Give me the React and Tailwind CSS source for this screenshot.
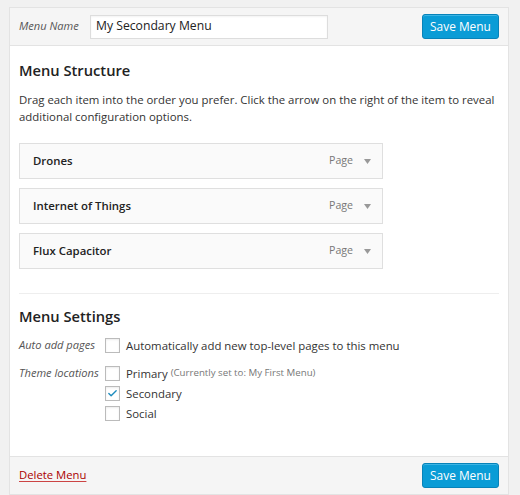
import { Check } from "lucide-react"

const items = ["Drones", "Internet of Things", "Flux Capacitor"]

function SaveButton() {
  return (
    <button className="h-[25px] w-[77px] rounded-[3px] border border-[#0783b9] bg-[#0a9cd6] text-[11.9px] text-white shadow-[inset_0_1px_0_#3cb4e4]">
      Save Menu
    </button>
  )
}

function Box({ checked }) {
  return (
    <span className="flex h-[15px] w-[15px] shrink-0 items-center justify-center border border-[#bbb] bg-white shadow-[inset_0_1px_2px_rgba(0,0,0,0.08)]">
      {checked && <Check className="h-[11px] w-[11px] text-[#1e8cbe]" strokeWidth={3} />}
    </span>
  )
}

export default function App() {
  return (
    <div className="h-[495px] w-[520px] overflow-hidden bg-[#f1f1f1] pl-[9px] pt-[7px] font-['Open_Sans',sans-serif] text-[11.4px] text-[#333]">
      <div className="w-[500px] border border-[#e3e3e3] bg-white">
        {/* Header */}
        <div className="flex h-[38px] items-center border-b border-[#e3e3e3] bg-[#f5f5f5] pl-[9px] pr-[9px]">
          <span className="w-[71px] whitespace-nowrap text-[11.1px] italic text-[#555]">Menu Name</span>
          <div className="flex h-[24px] w-[238px] items-center border border-[#ddd] bg-white px-[5px] text-[12.2px] text-[#222] shadow-[inset_0_1px_2px_rgba(0,0,0,0.05)]">
            My Secondary Menu
          </div>
          <div className="ml-auto">
            <SaveButton />
          </div>
        </div>

        {/* Body */}
        <div className="h-[410px] px-[9px] pt-[12px]">
          <h3 className="text-[14.7px] font-semibold leading-[24px] text-[#222]">Menu Structure</h3>
          <p className="mt-[10px] text-[11.4px] leading-[16.5px] text-[#333]">
            Drag each item into the order you prefer. Click the arrow on the right of the item to reveal additional configuration options.
          </p>

          <ul className="mt-[18px] flex flex-col gap-[9px]">
            {items.map((item) => (
              <li
                key={item}
                className="flex h-[36px] w-[364px] items-center border border-[#dfdfdf] bg-[#fafafa] pl-[13px] pr-[11px]"
              >
                <span className="text-[11.4px] font-semibold text-[#222]">{item}</span>
                <span className="ml-auto text-[10.6px] text-[#777]">Page</span>
                <svg className="ml-[11px]" width="7" height="5" viewBox="0 0 7 5">
                  <path d="M0 0h7L3.5 5z" fill="#999" />
                </svg>
              </li>
            ))}
          </ul>

          <div className="mt-[24px] border-t border-[#eee]" />

          <h3 className="mt-[10px] text-[14.7px] font-semibold leading-[24px] text-[#222]">Menu Settings</h3>

          <div className="mt-[10px] flex h-[15px] items-center">
            <span className="w-[86px] whitespace-nowrap text-[11.1px] italic text-[#555]">Auto add pages</span>
            <Box />
            <span className="ml-[6px] whitespace-nowrap text-[11.4px] text-[#333]">Automatically add new top-level pages to this menu</span>
          </div>

          <div className="mt-[13px] flex">
            <span className="flex h-[15px] w-[86px] items-center whitespace-nowrap text-[11.1px] italic text-[#555]">Theme locations</span>
            <div className="flex flex-col gap-[5px]">
              <div className="flex h-[15px] items-center">
                <Box />
                <span className="ml-[6px] text-[11.4px] text-[#333]">Primary</span>
                <span className="ml-[3px] text-[9.7px] text-[#777]">(Currently set to: My First Menu)</span>
              </div>
              <div className="flex h-[15px] items-center">
                <Box checked />
                <span className="ml-[6px] text-[11.4px] text-[#333]">Secondary</span>
              </div>
              <div className="flex h-[15px] items-center">
                <Box />
                <span className="ml-[6px] text-[11.4px] text-[#333]">Social</span>
              </div>
            </div>
          </div>
        </div>

        {/* Footer */}
        <div className="flex h-[38px] items-center border-t border-[#e3e3e3] bg-[#f5f5f5] pl-[9px] pr-[9px]">
          <a className="text-[11.3px] text-[#a00] underline decoration-[#c44] underline-offset-2">Delete Menu</a>
          <div className="ml-auto">
            <SaveButton />
          </div>
        </div>
      </div>
    </div>
  )
}
